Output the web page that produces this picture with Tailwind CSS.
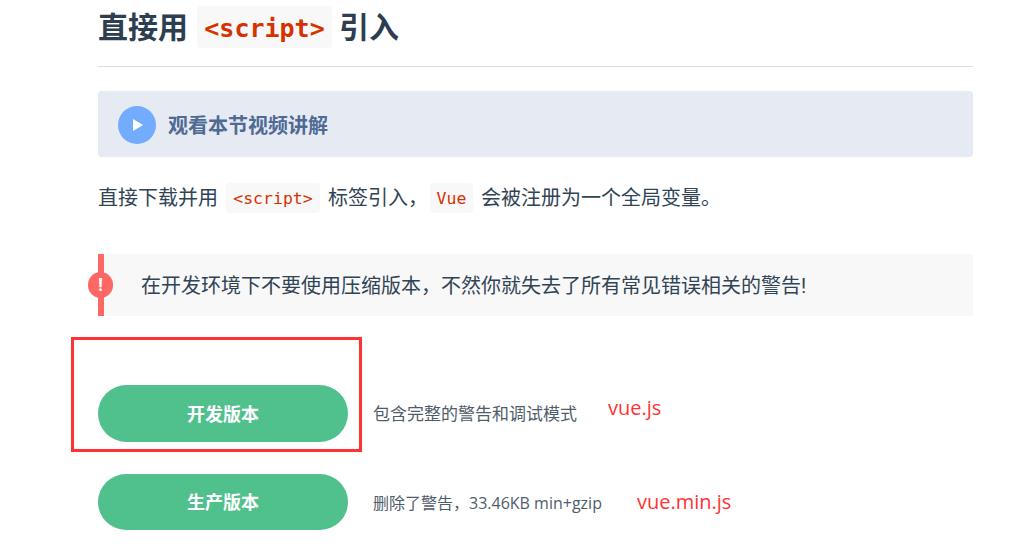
<!DOCTYPE html>
<html lang="zh-CN">
<head>
  <meta charset="UTF-8" />
  <title>安装</title>
  <script src="https://cdn.jsdelivr.net/npm/@tailwindcss/browser@4"></script>
</head>
<body class="bg-white h-[554px] overflow-hidden font-['Roboto','Noto_Sans_CJK_SC',sans-serif] text-[#304455]">
  <main class="relative w-[875px] ml-[98px]">
    <!-- Heading -->
    <h2 class="h-[67px] pt-[6px] border-b border-[#dddddd] flex items-start gap-[9px] text-[30px] leading-[44px] font-bold text-[#2c3e50]">
      <span>直接用</span>
      <code class="h-[42px] w-[135px] mr-[-2px] text-center rounded bg-[#f8f8f8] text-[#d63200] font-['DejaVu_Sans_Mono',monospace] text-[25px] font-bold leading-[45px]">&lt;script&gt;</code>
      <span>引入</span>
    </h2>

    <!-- Video banner -->
    <div class="mt-[24px] h-[66px] pl-[20px] pt-[2px] flex items-center gap-[12px] rounded bg-[#e6eaf2]">
      <span class="w-[38px] h-[38px] rounded-full bg-[#73abfe] flex items-center justify-center">
        <svg class="w-[12px] h-[14px] ml-[1px]" viewBox="0 0 12 14"><path d="M1 1 L11 7 L1 13 Z" fill="#ffffff"/></svg>
      </span>
      <span class="text-[20px] leading-[32px] pt-[1px] font-bold text-[#4f6a94]">观看本节视频讲解</span>
    </div>

    <!-- Intro paragraph -->
    <p class="mt-[26px] h-[30px] flex items-center text-[20px] text-[#304455]">
      <span>直接下载并用</span>
      <code class="ml-[8px] h-[30px] w-[94px] text-center rounded bg-[#f8f8f8] text-[#d63200] font-['DejaVu_Sans_Mono',monospace] text-[16.5px] leading-[32px]">&lt;script&gt;</code>
      <span class="ml-[8px]">标签引入，</span>
      <code class="ml-[2px] h-[30px] w-[43px] text-center rounded bg-[#f8f8f8] text-[#d63200] font-['DejaVu_Sans_Mono',monospace] text-[16.5px] leading-[32px]">Vue</code>
      <span class="ml-[8px]">会被注册为一个全局变量。</span>
    </p>

    <!-- Warning -->
    <div class="relative mt-[41px] h-[62px] pl-[37px] pt-[2px] flex items-center border-l-[6px] border-[#ff6666] bg-[#f8f8f8] text-[20px] text-[#304455]">
      <span class="absolute left-[-16px] top-[18px] w-[25px] h-[26px] rounded-full bg-[#ff6666] flex items-center justify-center text-white font-bold text-[18px] leading-none">!</span>
      在开发环境下不要使用压缩版本，不然你就失去了所有常见错误相关的警告!
    </div>

    <!-- Download rows -->
    <div class="mt-[69px] flex items-center">
      <a class="w-[250px] h-[57px] pt-[1px] rounded-full bg-[#50c08d] flex items-center justify-center text-white text-[18px] font-bold">开发版本</a>
      <span class="ml-[25px] pt-[2px] text-[17px] text-[#4f5d6b]">包含完整的警告和调试模式</span>
    </div>
    <div class="mt-[32px] flex items-center">
      <a class="w-[250px] h-[56px] pt-[1px] rounded-full bg-[#50c08d] flex items-center justify-center text-white text-[18px] font-bold">生产版本</a>
      <span class="ml-[25px] pt-[2px] text-[16px] font-['Open_Sans','Noto_Sans_CJK_SC',sans-serif] text-[#4f5d6b]">删除了警告，33.46KB min+gzip</span>
    </div>

    <!-- Annotations drawn over the screenshot -->
    <div class="absolute left-[-27px] top-[337px] w-[291px] h-[115px] border-[3px] border-[#ff3333]"></div>
    <span class="absolute left-[510px] top-[393px] text-[20px] leading-[30px] text-[#ff3333] font-['Open_Sans',sans-serif]">vue.js</span>
    <span class="absolute left-[539px] top-[487px] text-[20px] leading-[30px] text-[#ff3333] font-['Open_Sans',sans-serif]">vue.min.js</span>
  </main>
</body>
</html>
